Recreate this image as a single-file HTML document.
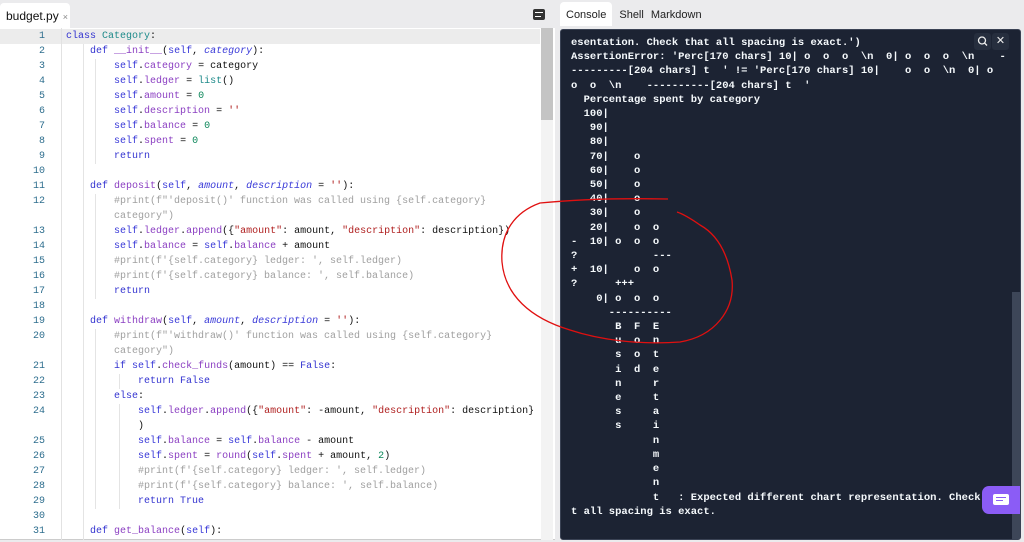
<!DOCTYPE html>
<html><head><meta charset="utf-8"><style>
*{margin:0;padding:0;box-sizing:border-box}
body{width:1024px;height:542px;overflow:hidden;background:#ebebed;position:relative;font-family:"Liberation Sans",sans-serif}
.tab{position:absolute;left:0;top:3px;width:70px;height:26px;background:#fff;border-radius:4px 4px 0 0;font-size:12px;color:#111;padding:6px 0 0 6px}
.tab span{font-size:9px;color:#888;margin-left:4px}
.ed{position:absolute;left:0;top:28px;width:555px;height:512px;background:#fff;border-bottom:1px solid #ccc}
.hl{position:absolute;left:0;top:1px;width:540px;height:15px;background:#ececec}
.gut{position:absolute;left:61px;top:0;width:1px;height:512px;background:#e2e2e2}
.sb{position:absolute;left:541px;top:0;width:12px;height:512px;background:#f3f3f3}
.sbt{position:absolute;left:541px;top:0;width:12px;height:92px;background:#c4c4c4}
pre{font-family:"Liberation Mono",monospace;white-space:pre}
.code{position:absolute;left:0;top:1px;font-size:10px;line-height:15px;color:#111}
.ln{display:inline-block;width:45px;text-align:right;color:#2e6e8e;margin-right:21px}
.k{color:#3333d0}.s{color:#3838d8}.a{color:#8b3fc2}.c{color:#1d8a8a}.n{color:#098658}.st{color:#b02020}.cm{color:#a0a0a0}.i{font-style:italic;color:#3838d8}
.guide{position:absolute;width:1px;background:#e4e4e4}
.rt{position:absolute;left:565px;top:9px;font-size:11px;color:#222}
.rt b{font-weight:normal;margin-right:7px}
.con{position:absolute;left:560px;top:29px;width:461px;height:511px;background:#1c2333;border:1px solid #3a4254;border-radius:3px}
.out{position:absolute;left:10px;top:6px;font-size:10.5px;line-height:14.2px;color:#f5f9fc;font-weight:bold}
.csb{position:absolute;left:451px;top:262px;width:8px;height:247px;background:#3d4658}
.ib{position:absolute;top:3px;width:17px;height:17px;border-radius:3px;background:#262e3e;color:#eee;font-size:11px;text-align:center;line-height:17px}
.chat{position:absolute;left:982px;top:486px;width:38px;height:28px;background:#8b5cf6;border-radius:7px 0 0 7px}
</style></head><body>
<div class="tab">budget.py<span>×</span></div>
<div style="position:absolute;left:533px;top:9px;width:12px;height:11px;background:#333;border-radius:2px"><div style="margin:3px 2px;height:1px;background:#fff;width:8px"></div><div style="margin:0 2px;height:1px;background:#fff;width:6px"></div></div>
<div class="ed">
<div class="hl"></div>
<div class="gut"></div>
<div class="guide" style="left:83px;top:16px;height:496px"></div>
<div class="guide" style="left:95px;top:31px;height:105px"></div>
<div class="guide" style="left:95px;top:166px;height:105px"></div>
<div class="guide" style="left:95px;top:301px;height:180px"></div>
<div class="guide" style="left:119px;top:346px;height:15px"></div>
<div class="guide" style="left:119px;top:376px;height:105px"></div>
<div class="sb"></div><div class="sbt"></div>
<pre class="code"><span class="ln">1</span><span class="k">class</span> <span class="c">Category</span>:
<span class="ln">2</span>    <span class="k">def</span> <span class="a">__init__</span>(<span class="s">self</span>, <span class="i">category</span>):
<span class="ln">3</span>        <span class="s">self</span>.<span class="a">category</span> = category
<span class="ln">4</span>        <span class="s">self</span>.<span class="a">ledger</span> = <span class="c">list</span>()
<span class="ln">5</span>        <span class="s">self</span>.<span class="a">amount</span> = <span class="n">0</span>
<span class="ln">6</span>        <span class="s">self</span>.<span class="a">description</span> = <span class="st">''</span>
<span class="ln">7</span>        <span class="s">self</span>.<span class="a">balance</span> = <span class="n">0</span>
<span class="ln">8</span>        <span class="s">self</span>.<span class="a">spent</span> = <span class="n">0</span>
<span class="ln">9</span>        <span class="k">return</span>
<span class="ln">10</span>
<span class="ln">11</span>    <span class="k">def</span> <span class="a">deposit</span>(<span class="s">self</span>, <span class="i">amount</span>, <span class="i">description</span> = <span class="st">''</span>):
<span class="ln">12</span>        <span class="cm">#print(f"'deposit()' function was called using {self.category}</span>
<span class="ln"></span>        <span class="cm">category")</span>
<span class="ln">13</span>        <span class="s">self</span>.<span class="a">ledger</span>.<span class="a">append</span>({<span class="st">"amount"</span>: amount, <span class="st">"description"</span>: description})
<span class="ln">14</span>        <span class="s">self</span>.<span class="a">balance</span> = <span class="s">self</span>.<span class="a">balance</span> + amount
<span class="ln">15</span>        <span class="cm">#print(f'{self.category} ledger: ', self.ledger)</span>
<span class="ln">16</span>        <span class="cm">#print(f'{self.category} balance: ', self.balance)</span>
<span class="ln">17</span>        <span class="k">return</span>
<span class="ln">18</span>
<span class="ln">19</span>    <span class="k">def</span> <span class="a">withdraw</span>(<span class="s">self</span>, <span class="i">amount</span>, <span class="i">description</span> = <span class="st">''</span>):
<span class="ln">20</span>        <span class="cm">#print(f"'withdraw()' function was called using {self.category}</span>
<span class="ln"></span>        <span class="cm">category")</span>
<span class="ln">21</span>        <span class="k">if</span> <span class="s">self</span>.<span class="a">check_funds</span>(amount) == <span class="k">False</span>:
<span class="ln">22</span>            <span class="k">return</span> <span class="k">False</span>
<span class="ln">23</span>        <span class="k">else</span>:
<span class="ln">24</span>            <span class="s">self</span>.<span class="a">ledger</span>.<span class="a">append</span>({<span class="st">"amount"</span>: -amount, <span class="st">"description"</span>: description}
<span class="ln"></span>            )
<span class="ln">25</span>            <span class="s">self</span>.<span class="a">balance</span> = <span class="s">self</span>.<span class="a">balance</span> - amount
<span class="ln">26</span>            <span class="s">self</span>.<span class="a">spent</span> = <span class="a">round</span>(<span class="s">self</span>.<span class="a">spent</span> + amount, <span class="n">2</span>)
<span class="ln">27</span>            <span class="cm">#print(f'{self.category} ledger: ', self.ledger)</span>
<span class="ln">28</span>            <span class="cm">#print(f'{self.category} balance: ', self.balance)</span>
<span class="ln">29</span>            <span class="k">return</span> <span class="k">True</span>
<span class="ln">30</span>
<span class="ln">31</span>    <span class="k">def</span> <span class="a">get_balance</span>(<span class="s">self</span>):</pre>
</div>
<div class="rt"><b style="background:#fff;padding:7px 6px 5px;margin-left:-5px;border-radius:4px 4px 0 0">Console</b><b>Shell</b><b>Markdown</b></div>
<div class="con">
<pre class="out">esentation. Check that all spacing is exact.')
AssertionError: 'Perc[170 chars] 10| o  o  o  \n  0| o  o  o  \n    -
---------[204 chars] t  ' != 'Perc[170 chars] 10|    o  o  \n  0| o
o  o  \n    ----------[204 chars] t  '
  Percentage spent by category
  100|
   90|
   80|
   70|    o
   60|    o
   50|    o
   40|    o
   30|    o
   20|    o  o
-  10| o  o  o
?            ---
+  10|    o  o
?      +++
    0| o  o  o
      ----------
       B  F  E
       u  o  n
       s  o  t
       i  d  e
       n     r
       e     t
       s     a
       s     i
             n
             m
             e
             n
             t   : Expected different chart representation. Check
t all spacing is exact.</pre>
<div class="csb"></div>
<div class="ib" style="left:413px"><svg width="17" height="17"><circle cx="8" cy="7.5" r="3.5" fill="none" stroke="#eee" stroke-width="1.3"/><path d="M10.5 10 L13 12.5" stroke="#eee" stroke-width="1.3"/></svg></div>
<div class="ib" style="left:431px">✕</div>
</div>
<div class="chat"><div style="position:absolute;left:11px;top:8px;width:16px;height:11px;background:#fff;border-radius:2px"><div style="margin:3px 3px 0;height:1px;background:#8b5cf6"></div><div style="margin:2px 3px 0;height:1px;background:#8b5cf6;width:7px"></div></div></div>
<svg style="position:absolute;left:0;top:0" width="1024" height="542"><path d="M668,199 C620,198 580,199 540,203 C515,212 500,232 502,262 C505,295 530,318 570,330 C600,340 640,345 680,342 C715,336 735,310 732,280 C728,255 718,235 700,225 C690,218 683,214 677,212" fill="none" stroke="#e01010" stroke-width="1.3"/></svg>
</body></html>
